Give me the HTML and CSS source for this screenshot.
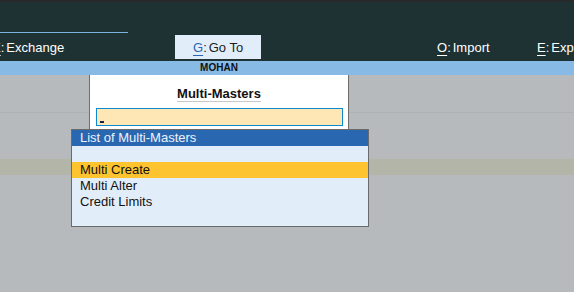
FILE: index.html
```html
<!DOCTYPE html>
<html>
<head>
<meta charset="utf-8">
<link rel="stylesheet" href="styles.css">
</head>
<body>
<div class="screen">
  <div class="top">
    <div class="topline"></div>
    <div class="toolbar">
      <div class="tb tb-exchange"><span class="k">E</span>:<span class="lbl">Exchange</span></div>
      <div class="tb tb-goto"><span class="k k-blue">G</span>:<span class="lbl">Go To</span></div>
      <div class="tb tb-import"><span class="k">O</span>:<span class="lbl">Import</span></div>
      <div class="tb tb-export"><span class="k">E</span>:<span class="lbl">Export</span></div>
    </div>
  </div>
  <div class="company"><div class="company-name">MOHAN</div></div>
  <div class="main">
    <div class="panel">
      <div class="title-wrap"><span class="title">Multi-Masters</span></div>
      <div class="input"><span class="cursor"></span></div>
    </div>
    <div class="list">
      <div class="list-head">List of Multi-Masters</div>
      <div class="row"></div>
      <div class="row row-sel">Multi Create</div>
      <div class="row">Multi Alter</div>
      <div class="row">Credit Limits</div>
    </div>
  </div>
</div>
</body>
</html>
```
FILE: styles.css
```css
html, body {
  margin: 0;
  padding: 0;
}
body {
  font-family: "Liberation Sans", Arial, sans-serif;
  background: #b6babd;
}
.screen {
  width: 574px;
  height: 292px;
  overflow: hidden;
  position: relative;
}
.top {
  height: 59px;
  border-top: 2px solid #28292b;
  background: #1f3233;
  overflow: hidden;
}
.topline {
  margin-top: 30px;
  width: 128px;
  height: 1px;
  background: #7eb3e0;
}
.toolbar {
  margin-top: 2px;
  height: 24px;
  display: flex;
  align-items: stretch;
  font-size: 13px;
  color: #ffffff;
  white-space: nowrap;
}
.tb {
  display: flex;
  align-items: center;
  flex-shrink: 0;
}
.k {
  text-decoration: underline;
  text-underline-offset: 3px;
}
.k-blue {
  color: #2a66b0;
  text-decoration-color: #2a66b0;
}
.lbl {
  margin-left: 2px;
}
.tb-exchange {
  margin-left: -8px;
  width: 183px;
}
.tb-goto {
  width: 68px;
  padding-left: 18px;
  background: #e1eefa;
  color: #1b1b1b;
}
.tb-import {
  margin-left: 176px;
  width: 100px;
}
.tb-export {
  width: 60px;
}
.company {
  height: 14px;
  background: #87bbe5;
}
.company-name {
  margin-left: 89px;
  width: 260px;
  text-align: center;
  font-size: 10px;
  font-weight: bold;
  line-height: 14px;
  color: #111111;
}
.main {
  position: relative;
  height: 217px;
  background:
    linear-gradient(#aeb2b5, #aeb2b5) 0 37px / 100% 1px no-repeat,
    linear-gradient(#b3b5a9, #b3b5a9) 0 84px / 100% 16px no-repeat,
    #b6babd;
}
.panel {
  margin-left: 89px;
  width: 258px;
  height: 62px;
  background: #ffffff;
  border-left: 1px solid #6e6e6e;
  border-right: 1px solid #6e6e6e;
  padding-top: 9px;
  box-sizing: content-box;
}
.title-wrap {
  text-align: center;
  height: 16px;
}
.title {
  display: inline-block;
  font-size: 13px;
  font-weight: bold;
  line-height: 15px;
  color: #111111;
  border-bottom: 1px solid #c8c8c8;
}
.input {
  margin-top: 8px;
  margin-left: 6px;
  width: 245px;
  height: 16px;
  background: #fee7b4;
  border: 1px solid #0a8ad0;
}
.cursor {
  display: block;
  width: 4px;
  height: 2px;
  margin-left: 3px;
  margin-top: 12px;
  background: #1b1f4e;
}
.list {
  position: absolute;
  left: 71px;
  top: 54px;
  width: 296px;
  height: 96px;
  background: #e1eefa;
  border: 1px solid #6b6b6b;
  font-size: 13px;
}
.list-head {
  height: 16px;
  line-height: 16px;
  padding-left: 8px;
  background: #2a67b1;
  color: #eef3fa;
}
.row {
  height: 16px;
  line-height: 16px;
  padding-left: 8px;
  color: #111111;
}
.row-sel {
  background: #fec42f;
}
```
